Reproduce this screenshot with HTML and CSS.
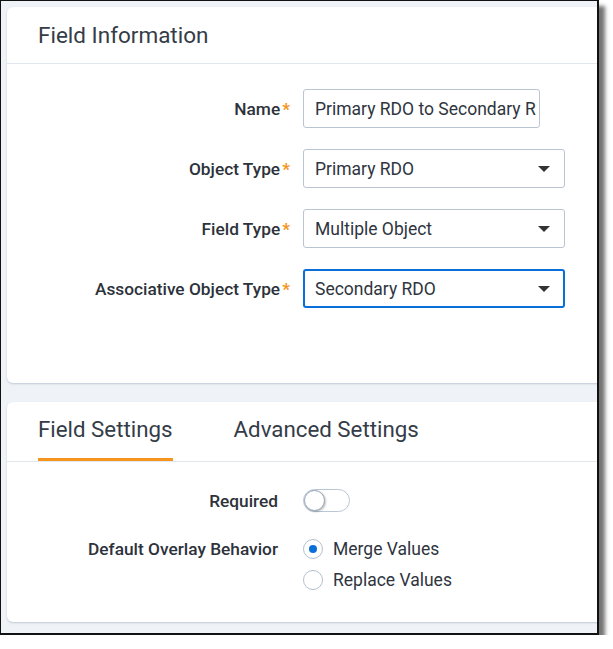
FILE: index.html
```html
<!DOCTYPE html>
<html>
<head>
<meta charset="utf-8">
<link rel="stylesheet" href="styles.css">
</head>
<body>
<div class="frame">
  <section class="card card-info">
    <header class="card-header">Field Information</header>
    <div class="form">
      <div class="label">Name<span class="req">*</span></div>
      <div class="control"><div class="input input-name">Primary RDO to Secondary R</div></div>

      <div class="label">Object Type<span class="req">*</span></div>
      <div class="control"><div class="input select">Primary RDO<span class="caret"></span></div></div>

      <div class="label">Field Type<span class="req">*</span></div>
      <div class="control"><div class="input select">Multiple Object<span class="caret"></span></div></div>

      <div class="label">Associative Object Type<span class="req">*</span></div>
      <div class="control"><div class="input select focused">Secondary RDO<span class="caret"></span></div></div>
    </div>
  </section>

  <section class="card card-settings">
    <nav class="tabs">
      <div class="tab active">Field Settings</div>
      <div class="tab">Advanced Settings</div>
    </nav>
    <div class="form form-settings">
      <div class="label plain">Required</div>
      <div class="control"><div class="toggle"><span class="knob"></span></div></div>

      <div class="label plain top">Default Overlay Behavior</div>
      <div class="control radios">
        <div class="radio-row"><span class="radio checked"></span><span class="radio-text">Merge Values</span></div>
        <div class="radio-row"><span class="radio"></span><span class="radio-text">Replace Values</span></div>
      </div>
    </div>
  </section>
</div>
</body>
</html>
```
FILE: styles.css
```css
* { box-sizing: border-box; }
html, body { margin: 0; padding: 0; background: #fff; }
body { font-family: Roboto, "Noto Sans", "Liberation Sans", sans-serif; color: #333a44; }

.frame {
  width: 599px;
  height: 635px;
  border: 1px solid #111;
  border-right-width: 2px;
  border-bottom-width: 2px;
  background: #eff3f7;
  box-shadow: 6px 6px 4px rgba(0,0,0,0.55);
  overflow: hidden;
  padding: 6px 0 0 6px;
  display: flex;
  flex-direction: column;
}

.card {
  width: 620px;
  background: #fff;
  border-radius: 6px;
  box-shadow: 0 1px 2px rgba(60,80,110,0.25);
  flex: none;
}
.card-info { height: 376px; }
.card-settings { height: 220px; margin-top: 19px; }

.card-header {
  height: 57px;
  padding: 14px 0 0 31px;
  font-size: 22.5px;
  line-height: 28px;
  color: #343c48;
  border-bottom: 1px solid #e0e7ef;
}

.form {
  display: grid;
  grid-template-columns: 283px auto;
  column-gap: 13px;
  row-gap: 21px;
  padding-top: 25px;
  align-items: center;
  justify-items: start;
}
.label {
  justify-self: end;
  font-size: 17.3px;
  font-weight: 500;
  color: #2d323b;
  white-space: nowrap;
}
.req { color: #f7941d; margin-left: 2px; font-weight: 700; }

.input {
  height: 39px;
  border: 1px solid #b9c5d3;
  border-radius: 3px;
  background: #fff;
  font-size: 17.5px;
  color: #2f3540;
  padding: 0 0 0 11px;
  display: flex;
  align-items: center;
  white-space: nowrap;
  overflow: hidden;
  position: relative;
}
.input-name { width: 237px; }
.select { width: 262px; }
.select.focused { border: 2px solid #0a6fd8; padding-left: 10px; }
.caret {
  position: absolute;
  right: 14px;
  top: 16px;
  width: 0; height: 0;
  border-left: 6px solid transparent;
  border-right: 6px solid transparent;
  border-top: 6px solid #333;
}
.select.focused .caret { right: 13px; top: 15px; }

.tabs {
  display: flex;
  gap: 61px;
  padding-left: 31px;
  height: 60px;
  border-bottom: 1px solid #e0e7ef;
}
.tab {
  font-size: 22.3px;
  line-height: 28px;
  padding-top: 13px;
  color: #343c48;
}
.tab.active {
  border-bottom: 3px solid #f7941d;
  height: 59px;
}

.form-settings {
  grid-template-columns: 271px auto;
  column-gap: 25px;
  row-gap: 27px;
  padding-top: 27px;
}
.label.top { align-self: start; line-height: 20px; }

.toggle {
  width: 47px;
  height: 23px;
  border: 1px solid #b9c6d6;
  border-radius: 12px;
  background: #fff;
  position: relative;
}
.knob {
  position: absolute;
  left: 0px;
  top: 0px;
  width: 21px;
  height: 21px;
  border-radius: 50%;
  background: #fff;
  border: 1px solid #97a4b4;
  box-shadow: 1px 1px 2px rgba(0,0,0,0.25);
}

.radios { display: flex; flex-direction: column; gap: 11px; }
.radio-row { display: flex; align-items: center; height: 20px; gap: 10px; }
.radio {
  width: 20px; height: 20px;
  border-radius: 50%;
  border: 1px solid #b4c0ce;
  background: #fff;
  position: relative;
  flex: none;
}
.radio.checked::after {
  content: "";
  position: absolute;
  left: 5px; top: 5px;
  width: 8px; height: 8px;
  border-radius: 50%;
  background: #0a6fd8;
}
.radio-text { font-size: 17.5px; color: #2f3540; }
```
